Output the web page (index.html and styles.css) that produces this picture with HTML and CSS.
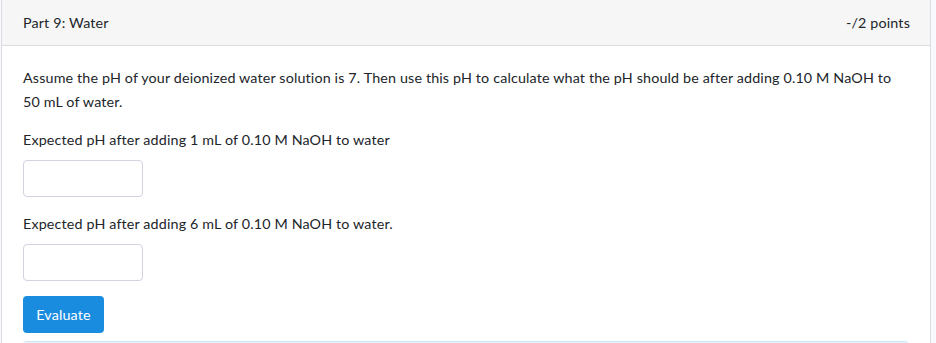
FILE: index.html
```html
<!DOCTYPE html>
<html>
<head>
<meta charset="utf-8">
<link rel="stylesheet" href="styles.css">
</head>
<body>
<div class="card">
  <div class="card-header">
    <span class="title">Part 9: Water</span>
    <span class="points">-/2 points</span>
  </div>
  <div class="card-body">
    <p class="intro">Assume the pH of your deionized water solution is 7. Then use this pH to calculate what the pH should be after adding 0.10 M NaOH to 50 mL of water.</p>
    <label class="q">Expected pH after adding 1 mL of 0.10 M NaOH to water</label>
    <input class="answer" type="text">
    <label class="q">Expected pH after adding 6 mL of 0.10 M NaOH to water.</label>
    <input class="answer" type="text">
    <button class="btn">Evaluate</button>
    <div class="alert"></div>
  </div>
</div>
</body>
</html>
```
FILE: styles.css
```css
html, body {
  margin: 0;
  padding: 0;
  background: #f8f9fc;
  height: 100%;
  overflow: hidden;
}
body {
  font-family: Lato, "Noto Sans", sans-serif;
  font-size: 14.3px;
  letter-spacing: 0.15px;
  color: #212529;
  padding-left: 1px;
}
.card {
  width: 928px;
  background: #fff;
  border-left: 1px solid #dcdde0;
  border-right: 1px solid #dcdde0;
  min-height: 400px;
}
.card-header {
  height: 45px;
  background: #f6f6f6;
  border-bottom: 1px solid #dcdcdc;
  display: flex;
  align-items: center;
  justify-content: space-between;
  padding: 0 20px 0 21px;
  font-size: 14.3px;
}
.card-body {
  padding: 20px 21px 0 21px;
  display: flex;
  flex-direction: column;
  align-items: flex-start;
}
.intro {
  margin: 0 0 14px 0;
  line-height: 24px;
  padding-right: 4px;
}
.q {
  line-height: 24px;
  margin-bottom: 8px;
}
.answer {
  box-sizing: border-box;
  width: 120px;
  height: 37px;
  border: 1px solid #d1d3e2;
  border-radius: 4px;
  margin: 0 0 22px 0;
  padding: 0 10px;
}
.answer + .q { margin-top: -7px; }
.btn {
  margin-top: -7px;
  width: 81px;
  height: 37px;
  background: #1a8ce0;
  color: #fff;
  border: none;
  border-radius: 4px;
  font-family: inherit;
  font-size: 14.3px;
  letter-spacing: 0.15px;
}
.alert {
  margin-top: 8px;
  width: 886px;
  height: 20px;
  border-top: 1px solid #cfe8f7;
  background: #e8f4fc;
  border-radius: 4px 4px 0 0;
}
```
